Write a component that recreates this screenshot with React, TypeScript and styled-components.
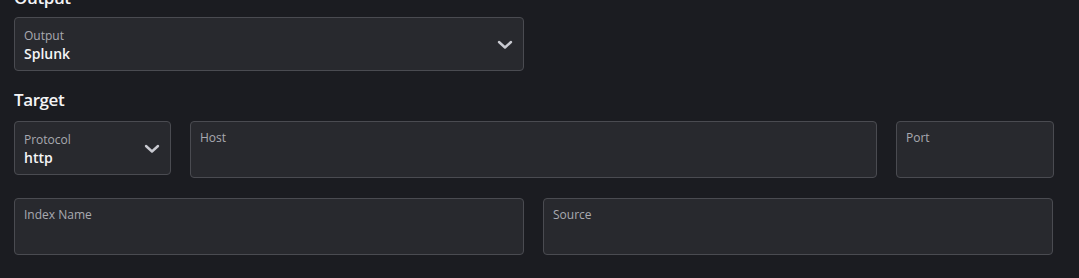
import React from "react";
import styled, { createGlobalStyle } from "styled-components";

const GlobalStyle = createGlobalStyle`
  html, body {
    margin: 0;
    padding: 0;
    background: #1b1c21;
    height: 100%;
    overflow: hidden;
  }
  body {
    font-family: "Open Sans", "Noto Sans", Arial, sans-serif;
    color: #f2f2f4;
  }
`;

const Page = styled.div`
  margin-top: -14px;
  padding-left: 14px;
  width: 1040px;
  display: flex;
  flex-direction: column;
`;

const Heading = styled.h3<{ $top: number; $bottom: number }>`
  margin: ${(p) => p.$top}px 0 ${(p) => p.$bottom}px;
  font-size: 17px;
  line-height: 24px;
  font-weight: 600;
  letter-spacing: -0.4px;
  color: #f4f4f6;
`;

const Box = styled.div<{ $w?: string; $h: number; $pt: number }>`
  box-sizing: border-box;
  width: ${(p) => p.$w ?? "auto"};
  height: ${(p) => p.$h}px;
  background: #28292e;
  border: 1px solid #4a4b51;
  border-radius: 4px;
  padding: ${(p) => p.$pt}px 10px 0 9px;
  display: flex;
  align-items: flex-start;
  justify-content: space-between;
`;

const Stack = styled.div`
  display: flex;
  flex-direction: column;
  min-width: 0;
`;

const Label = styled.span`
  font-size: 12px;
  line-height: 16px;
  color: #a9aab1;
`;

const Value = styled.span`
  margin-top: 1px;
  font-size: 14px;
  line-height: 18px;
  font-weight: 600;
  color: #f5f5f7;
`;

const Chevron = styled.svg`
  align-self: center;
  margin-top: -9px;
  flex: none;
`;

const Row = styled.div<{ $cols: string; $mt: number; $w?: string }>`
  display: grid;
  width: ${(p) => p.$w ?? "100%"};
  grid-template-columns: ${(p) => p.$cols};
  column-gap: 19px;
  margin-top: ${(p) => p.$mt}px;
  align-items: start;
`;

const ChevronIcon = () => (
  <Chevron width="16" height="10" viewBox="0 0 16 10">
    <path
      d="M2 2 L8 7.5 L14 2"
      fill="none"
      stroke="#c9cad1"
      strokeWidth="2.4"
      strokeLinecap="round"
      strokeLinejoin="round"
    />
  </Chevron>
);

const Select = ({ label, value, w }: { label: string; value: string; w?: string }) => (
  <Box $w={w} $h={54} $pt={10}>
    <Stack>
      <Label>{label}</Label>
      <Value>{value}</Value>
    </Stack>
    <ChevronIcon />
  </Box>
);

const TextField = ({ label }: { label: string }) => (
  <Box $h={57} $pt={8}>
    <Stack>
      <Label>{label}</Label>
    </Stack>
  </Box>
);

export default function App() {
  return (
    <>
      <GlobalStyle />
      <Page>
        <Heading $top={0} $bottom={7}>Output</Heading>
        <Select label="Output" value="Splunk" w="510px" />
        <Heading $top={17} $bottom={9}>Target</Heading>
        <Row $cols="157px 1fr 158px" $mt={0}>
          <Select label="Protocol" value="http" />
          <TextField label="Host" />
          <TextField label="Port" />
        </Row>
        <Row $cols="1fr 1fr" $mt={20} $w="1039px">
          <TextField label="Index Name" />
          <TextField label="Source" />
        </Row>
      </Page>
    </>
  );
}
